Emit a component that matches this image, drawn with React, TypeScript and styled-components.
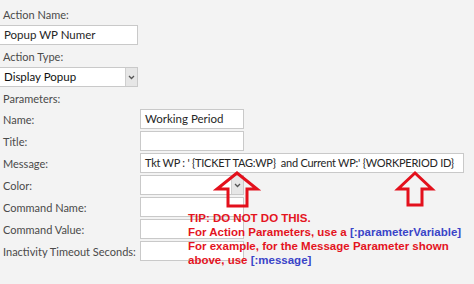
import React from 'react';
import styled, { createGlobalStyle } from 'styled-components';

const GlobalStyle = createGlobalStyle`
  html, body {
    margin: 0;
    padding: 0;
    background: #f3f3f3;
  }
`;

const Page = styled.div`
  position: relative;
  width: 474px;
  height: 284px;
  overflow: hidden;
  padding-top: 5px;
  box-sizing: border-box;
  font-family: Lato, 'Open Sans', sans-serif;
  font-size: 11px;
  color: #4a4a4a;
`;

const Label = styled.div`
  height: 20px;
  line-height: 20px;
  padding-left: 3px;
`;

const TextBox = styled.div<{ $w: number; $tight?: boolean }>`
  box-sizing: border-box;
  width: ${(p) => p.$w}px;
  height: 20px;
  line-height: 18px;
  background: #fff;
  border: 1px solid #c9c9c9;
  padding-left: 4px;
  color: #262626;
  white-space: pre;
  overflow: hidden;
  font-size: ${(p) => (p.$tight ? '11px' : '11.5px')};
  letter-spacing: ${(p) => (p.$tight ? '-0.25px' : '0')};
`;

const TopBox = styled(TextBox)`
  margin-left: -1px;
  margin-bottom: 2px;
`;

const SelectBox = styled(TextBox)`
  display: flex;
  justify-content: space-between;
  padding-right: 0;
`;

const DropButton = styled.span`
  width: 11px;
  height: 18px;
  background: #e6e6e6;
  border-left: 1px solid #cfcfcf;
  display: flex;
  align-items: center;
  justify-content: center;
`;

const Grid = styled.div`
  display: grid;
  grid-template-columns: 140px auto;
  row-gap: 2px;
  align-items: center;
`;

const GridLabel = styled.div`
  padding-left: 3px;
  white-space: nowrap;
`;

const Overlay = styled.svg`
  position: absolute;
  left: 0;
  top: 0;
  pointer-events: none;
`;

const Tip = styled.div`
  position: absolute;
  left: 188px;
  top: 211px;
  font-family: 'Liberation Sans', Arial, sans-serif;
  font-weight: bold;
  font-size: 11.5px;
  line-height: 14px;
  color: #e4141e;
  white-space: nowrap;
`;

const Var = styled.span`
  color: #3a44c8;
`;

const Chevron = () => (
  <svg width="7" height="5" viewBox="0 0 7 5">
    <path d="M1 1 L3.5 3.5 L6 1" fill="none" stroke="#555" strokeWidth="1.3" />
  </svg>
);

const params: { label: string; w: number; value?: string; select?: boolean; tight?: boolean }[] = [
  { label: 'Name:', w: 104, value: 'Working Period' },
  { label: 'Title:', w: 104 },
  {
    label: 'Message:',
    w: 324,
    value: "Tkt WP : ' {TICKET TAG:WP}  and Current WP:' {WORKPERIOD ID}",
    tight: true,
  },
  { label: 'Color:', w: 104, select: true },
  { label: 'Command Name:', w: 104 },
  { label: 'Command Value:', w: 104 },
  { label: 'Inactivity Timeout Seconds:', w: 104 },
];

export default function App() {
  return (
    <Page>
      <GlobalStyle />
      <Label>Action Name:</Label>
      <TopBox $w={139}>Popup WP Numer</TopBox>
      <Label>Action Type:</Label>
      <TopBox $w={139} as={SelectBox} style={{ color: '#111' }}>
        <span>Display Popup</span>
        <DropButton>
          <Chevron />
        </DropButton>
      </TopBox>
      <Label>Parameters:</Label>
      <Grid>
        {params.map((p) => (
          <React.Fragment key={p.label}>
            <GridLabel>{p.label}</GridLabel>
            {p.select ? (
              <SelectBox $w={p.w}>
                <span>{p.value}</span>
                <DropButton>
                  <Chevron />
                </DropButton>
              </SelectBox>
            ) : (
              <TextBox $w={p.w} $tight={p.tight}>
                {p.value}
              </TextBox>
            )}
          </React.Fragment>
        ))}
      </Grid>
      <Overlay width="474" height="284">
        <polygon
          points="237,173 217,189 228,189 228,206 247,206 247,189 257,189"
          fill="none"
          stroke="#e3101c"
          strokeWidth="3"
        />
        <polygon
          points="415,173 398,189 408,189 408,205 422,205 422,189 432,189"
          fill="none"
          stroke="#e3101c"
          strokeWidth="3"
        />
      </Overlay>
      <Tip>
        TIP: DO NOT DO THIS.
        <br />
        For Action Parameters, use a <Var>[:parameterVariable]</Var>
        <br />
        For example, for the Message Parameter shown
        <br />
        above, use <Var>[:message]</Var>
      </Tip>
    </Page>
  );
}
